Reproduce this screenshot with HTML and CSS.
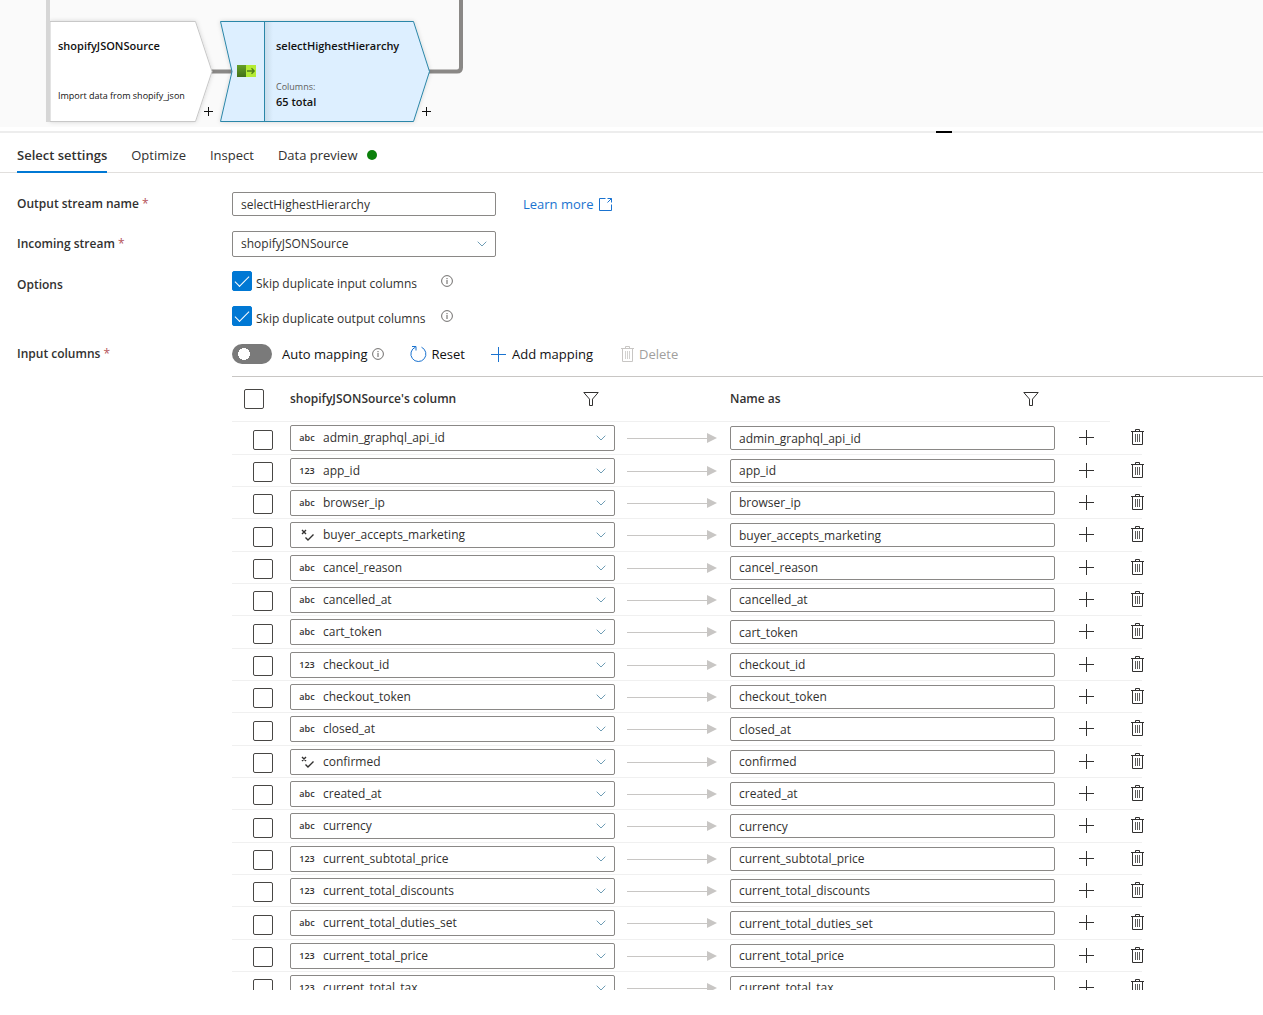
FILE: index.html
```html
<!DOCTYPE html>
<html lang="en">
<head>
<meta charset="utf-8">
<title>Data flow - Select settings</title>
<link rel="stylesheet" href="styles.css">
</head>
<body>
<svg class="sprite" aria-hidden="true">
  <symbol id="chevron" viewBox="0 0 10 6"><path d="M.7.7 5 5 9.300.7" fill="none" stroke="currentColor"/></symbol>
  <symbol id="info" viewBox="0 0 12 12"><circle cx="6" cy="6" r="5.400" fill="none" stroke="currentColor" stroke-width=".9"/><path d="M6 5v4M6 3v1.200" stroke="currentColor"/></symbol>
  <symbol id="plus" viewBox="0 0 16 16"><path d="M0 8.500h15M7.500 1v15" stroke="currentColor"/></symbol>
  <symbol id="trash" viewBox="0 0 13 16"><path d="M0 2.500h13M4.500 2.500v-2h4v2M1.500 2.500v13h10v-13" fill="none" stroke="currentColor"/><path d="M4.500 5v8M6.500 5v8M8.500 5v8" stroke="currentColor" stroke-width=".8"/></symbol>
  <symbol id="filter" viewBox="0 0 16 15"><path d="M.8.500h14.400L9.500 7.100v6.400h-3V7.100z" fill="none" stroke="currentColor"/></symbol>
  <symbol id="arrow" viewBox="0 0 90 10"><path d="M0 5.500h81" stroke="currentColor"/><path d="M80 0l10 5-10 5z" fill="currentColor"/></symbol>
  <symbol id="bool" viewBox="0 0 13 12"><path d="M1 1l4 4M5 1L1 5M4.500 8.500l2.500 2.500L12.500 5.500" fill="none" stroke="currentColor" stroke-width="1.400"/></symbol>
</svg>

<section class="canvas" aria-label="Data flow graph">
  <svg class="graph" width="480" height="127" viewBox="0 0 480 127" aria-hidden="true">
    <defs>
      <linearGradient id="leaf" x1="0" y1="0" x2="0" y2="1"><stop offset="0" stop-color="#66a026"/><stop offset="1" stop-color="#41701a"/></linearGradient>
      <linearGradient id="fold"><stop offset="0" stop-color="#c9dceb"/><stop offset="1" stop-color="#ddefff"/></linearGradient>
      <filter id="shade" x="-10%" y="-10%" width="120%" height="120%"><feDropShadow dx="0" dy="0" stdDeviation="2" flood-opacity=".15"/></filter>
    </defs>
    <path d="M210 71.500h24M429 71.500h28q4 0 4-4V0" fill="none" stroke="#8a8886" stroke-width="4"/>
    <path d="M50 21.500h145.500L212 71.500l-16.500 50H50z" fill="#fff" stroke="#c8c8c8" filter="url(#shade)"/>
    <path d="M46 0h4v122h-4z" fill="#d6d6d6"/>
    <path d="M220.500 21.500h193l16 50-16 50h-193l11.500-50z" fill="#ddefff" stroke="#2a86a8" filter="url(#shade)"/>
    <path d="M265 22h8v99h-8z" fill="url(#fold)"/>
    <path d="M264.500 22v99" stroke="#2a86a8"/>
    <path d="M237 65h9v12h-9z" fill="url(#leaf)"/>
    <path d="M246 65h10v12h-10z" fill="#b4ec36"/>
    <path d="M247 71h7M251.500 68.300l2.700 2.700-2.700 2.700" fill="none" stroke="#4f7d1c" stroke-width="1.300"/>
  </svg>
  <div class="node node-source">
    <strong>shopifyJSONSource</strong>
    <span>Import data from shopify_json</span>
  </div>
  <button class="add add-source" aria-label="Add after source"><svg width="9" height="9" viewBox="0 0 9 9"><path d="M0 4.500h9M4.500 0v9" stroke="currentColor"/></svg></button>
  <div class="node node-select">
    <strong>selectHighestHierarchy</strong>
    <span class="caption">Columns:</span>
    <strong>65 total</strong>
  </div>
  <button class="add add-select" aria-label="Add after select"><svg width="9" height="9" viewBox="0 0 9 9"><path d="M0 4.500h9M4.500 0v9" stroke="currentColor"/></svg></button>
</section>

<div class="splitter"><span class="grip"></span></div>

<nav class="tabs">
  <button class="tab active">Select settings</button>
  <button class="tab">Optimize</button>
  <button class="tab">Inspect</button>
  <button class="tab">Data preview<span class="dot"></span></button>
</nav>

<main class="settings">
  <div class="field">
    <label class="name" for="output">Output stream name <span class="req">*</span></label>
    <input class="box wide" id="output" type="text" value="selectHighestHierarchy">
    <a class="learn" href="#">Learn more
      <svg width="13" height="13" viewBox="0 0 13 13"><path d="M6.500.5h-6v12h12v-6M8.500.5h4v4M12.500.5l-4 4" fill="none" stroke="currentColor"/></svg></a>
  </div>
  <div class="field">
    <label class="name" for="incoming">Incoming stream <span class="req">*</span></label>
    <div class="combo wide">
      <select id="incoming"><option>shopifyJSONSource</option></select>
      <svg class="chev" width="10" height="6"><use href="#chevron"/></svg>
    </div>
  </div>
  <div class="field options">
    <span class="name">Options</span>
    <div class="checks">
      <div class="check"><label><input type="checkbox" checked><span>Skip duplicate input columns</span></label><svg class="info" width="12" height="12"><use href="#info"/></svg></div>
      <div class="check"><label><input type="checkbox" checked><span>Skip duplicate output columns</span></label><svg class="info" width="12" height="12"><use href="#info"/></svg></div>
    </div>
  </div>
  <div class="field">
    <span class="name">Input columns <span class="req">*</span></span>
    <div class="toolbar">
      <label class="auto"><input class="toggle" type="checkbox" role="switch">Auto mapping</label>
      <svg class="info" width="12" height="12"><use href="#info"/></svg>
      <button class="tool reset"><svg width="17" height="18" viewBox="0 0 17 18"><path d="M11.500 2.200a7.500 7.500 0 1 1-6-.1M2 1.500h4v4" fill="none" stroke="currentColor"/></svg>Reset</button>
      <button class="tool map"><svg width="16" height="16"><use href="#plus"/></svg>Add mapping</button>
      <button class="tool remove" disabled><svg width="13" height="16"><use href="#trash"/></svg>Delete</button>
    </div>
  </div>

  <div class="mapping">
    <table>
      <colgroup><col class="c-check"><col class="c-field"><col class="c-arrow"><col class="c-field"><col class="c-plus"><col class="c-trash"></colgroup>
      <thead>
        <tr>
          <th><input type="checkbox" aria-label="Select all"></th>
          <th><div class="head">shopifyJSONSource's column<button aria-label="Filter source columns"><svg width="16" height="15"><use href="#filter"/></svg></button></div></th>
          <th></th>
          <th><div class="head">Name as<button aria-label="Filter names"><svg width="16" height="15"><use href="#filter"/></svg></button></div></th>
          <th></th>
          <th></th>
        </tr>
      </thead>
      <tbody id="rows"></tbody>
    </table>
  </div>
</main>
<script src="rows.js"></script>
</body>
</html>
```
FILE: styles.css
```css
* { box-sizing: border-box; }

body {
  margin: 0;
  height: 100vh;
  display: flex;
  flex-direction: column;
  background: #fff;
  color: #323130;
  font: 12px/16px "Open Sans", "Noto Sans", sans-serif;
}

button, input, select { font: inherit; color: inherit; }
button { padding: 0; border: 0; background: none; }
svg { display: block; flex: none; }
.sprite { position: absolute; width: 0; height: 0; }

/* Graph canvas */
.canvas { position: relative; flex: none; height: 127px; background: #fafafa; overflow: hidden; color: #111; }
.graph { position: absolute; left: 0; top: 0; }
.node { position: absolute; top: 38px; display: flex; flex-direction: column; font-size: 9px; white-space: nowrap; }
.node strong { font-size: 11px; font-weight: 600; }
.node-source { left: 58px; gap: 34px; }
.node-select { left: 276px; }
.node .caption { margin-top: 26px; line-height: 14px; color: #605e5c; }
.add { position: absolute; top: 107px; }
.add-source { left: 204px; }
.add-select { left: 422px; }

.splitter { position: relative; flex: none; height: 6px; border-bottom: 2px solid #ededed; }
.grip { position: absolute; left: 936px; top: 4px; width: 16px; height: 2px; background: #000; }

/* Tabs */
.tabs { flex: none; display: flex; gap: 24px; height: 40px; padding-left: 17px; border-bottom: 1px solid #e1dfdd; }
.tab { height: 40px; padding: 10px 0 4px; display: flex; align-items: center; border-bottom: 2px solid transparent; font-size: 13px; white-space: nowrap; }
.tab.active { border-color: #0078d4; font-weight: 600; }
.dot { width: 10px; height: 10px; margin-left: 10px; border-radius: 50%; background: #0b800b; }

/* Form */
.settings { flex: 1; min-height: 0; display: flex; flex-direction: column; padding: 19px 0 25px; }
.field { flex: none; display: flex; align-items: center; margin-bottom: 15px; }
.name { flex: none; width: 232px; padding-left: 17px; font-weight: 600; }
.req { color: #b5545a; font-weight: 400; }
.box, .combo { border: 1px solid #8a8886; border-radius: 2px; background: #fff; }
.box { display: block; width: 100%; height: 24px; padding: 0 8px; }
.combo { display: flex; align-items: center; width: 100%; height: 26px; padding: 0 8px; }
.combo select { flex: 1; min-width: 0; height: 24px; padding: 0; border: 0; background: none; appearance: none; }
.box.wide, .combo.wide { width: 264px; }
.chev { color: #6f9db5; }
.learn { display: flex; align-items: center; gap: 6px; margin-left: 27px; color: #1a73d0; font-size: 13px; text-decoration: none; }

input[type="checkbox"] { appearance: none; flex: none; width: 20px; height: 20px; margin: 0; border: 1px solid #484644; border-radius: 2px; background: #fff; }
input[type="checkbox"]:checked { display: grid; place-items: center; border-color: #0078d4; background: #0078d4; }
input[type="checkbox"]:checked::before { content: ""; width: 13px; height: 6px; margin-bottom: 4px; border: solid #fff; border-width: 0 0 1px 1px; rotate: -45deg; }
.options { align-items: flex-start; margin: -1px 0 18px; }
.options .name { padding-top: 6px; }
.checks { display: grid; gap: 15px; }
.check { display: flex; justify-content: space-between; gap: 15px; height: 20px; }
.check label { display: flex; gap: 4px; }
.check label span { padding-top: 5px; }
.check .info { margin-top: 4px; }
.info { color: #605e5c; }

.toolbar { display: flex; align-items: center; color: #111; font-size: 13px; }
.auto { display: flex; align-items: center; gap: 10px; margin-right: 4px; }
.auto .toggle { width: 40px; border: 0; border-radius: 10px; background: radial-gradient(circle 6px at 12px 10px, #fff 95%, #7a7a7a); }
.tool { display: flex; align-items: center; gap: 5px; }
.tool svg { color: #1a73d0; }
.reset { margin-left: 26px; }
.map { margin-left: 26px; }
.remove { margin-left: 28px; color: #a19f9d; }
.tool.remove svg { color: #c8c6c4; }

/* Mapping table */
.mapping { flex: 1; min-height: 0; margin: -3px 0 0 232px; border-top: 1px solid #c8c6c4; overflow: auto; scrollbar-width: none; }
table { width: 910px; table-layout: fixed; border-collapse: separate; border-spacing: 0; }
.c-check { width: 58px; }
.c-field { width: 325px; }
.c-arrow { width: 115px; }
.c-plus { width: 55px; }
.c-trash { width: 32px; }
th, td { padding: 0; border-bottom: 1px solid #f0f0f0; text-align: left; vertical-align: middle; }
th { height: 45px; font-weight: 600; }
th:last-child { border: 0; }
th input, td input { display: block; }
th input[type="checkbox"] { margin-left: 12px; }
.head { display: flex; align-items: center; justify-content: space-between; padding-right: 16px; }
td { height: 32px; }
tr:nth-child(3n+1) td { height: 33px; }
td:first-child { padding-top: 3px; }
td input[type="checkbox"] { margin-left: 21px; }
.type { flex: none; display: grid; place-items: center; width: 16px; margin-right: 8px; font-size: 9px; font-weight: 600; }
.arrow { margin-left: 12px; color: #c8c6c4; }
.plus, .trash { display: block; margin-bottom: 2px; }
.plus { margin-left: 24px; }
.trash { margin-left: 21px; }
```
FILE: rows.js
```js
const columns = [
  ["abc", "admin_graphql_api_id"],
  ["123", "app_id"],
  ["abc", "browser_ip"],
  ["bool", "buyer_accepts_marketing"],
  ["abc", "cancel_reason"],
  ["abc", "cancelled_at"],
  ["abc", "cart_token"],
  ["123", "checkout_id"],
  ["abc", "checkout_token"],
  ["abc", "closed_at"],
  ["bool", "confirmed"],
  ["abc", "created_at"],
  ["abc", "currency"],
  ["123", "current_subtotal_price"],
  ["123", "current_total_discounts"],
  ["abc", "current_total_duties_set"],
  ["123", "current_total_price"],
  ["123", "current_total_tax"],
];

const icon = (id, w, h, cls = "") =>
  `<svg class="${cls}" width="${w}" height="${h}"><use href="#${id}"/></svg>`;

document.getElementById("rows").innerHTML = columns.map(([type, name]) => `
  <tr>
    <td><input type="checkbox" aria-label="Select ${name}"></td>
    <td><div class="combo">
      <span class="type">${type === "bool" ? icon("bool", 13, 12) : type}</span>
      <select aria-label="Source column"><option>${name}</option></select>
      ${icon("chevron", 10, 6, "chev")}
    </div></td>
    <td>${icon("arrow", 90, 10, "arrow")}</td>
    <td><input class="box" type="text" aria-label="Name as" value="${name}"></td>
    <td><button class="plus" aria-label="Add mapping">${icon("plus", 16, 16)}</button></td>
    <td><button class="trash" aria-label="Delete mapping">${icon("trash", 13, 16)}</button></td>
  </tr>`).join("");
```
